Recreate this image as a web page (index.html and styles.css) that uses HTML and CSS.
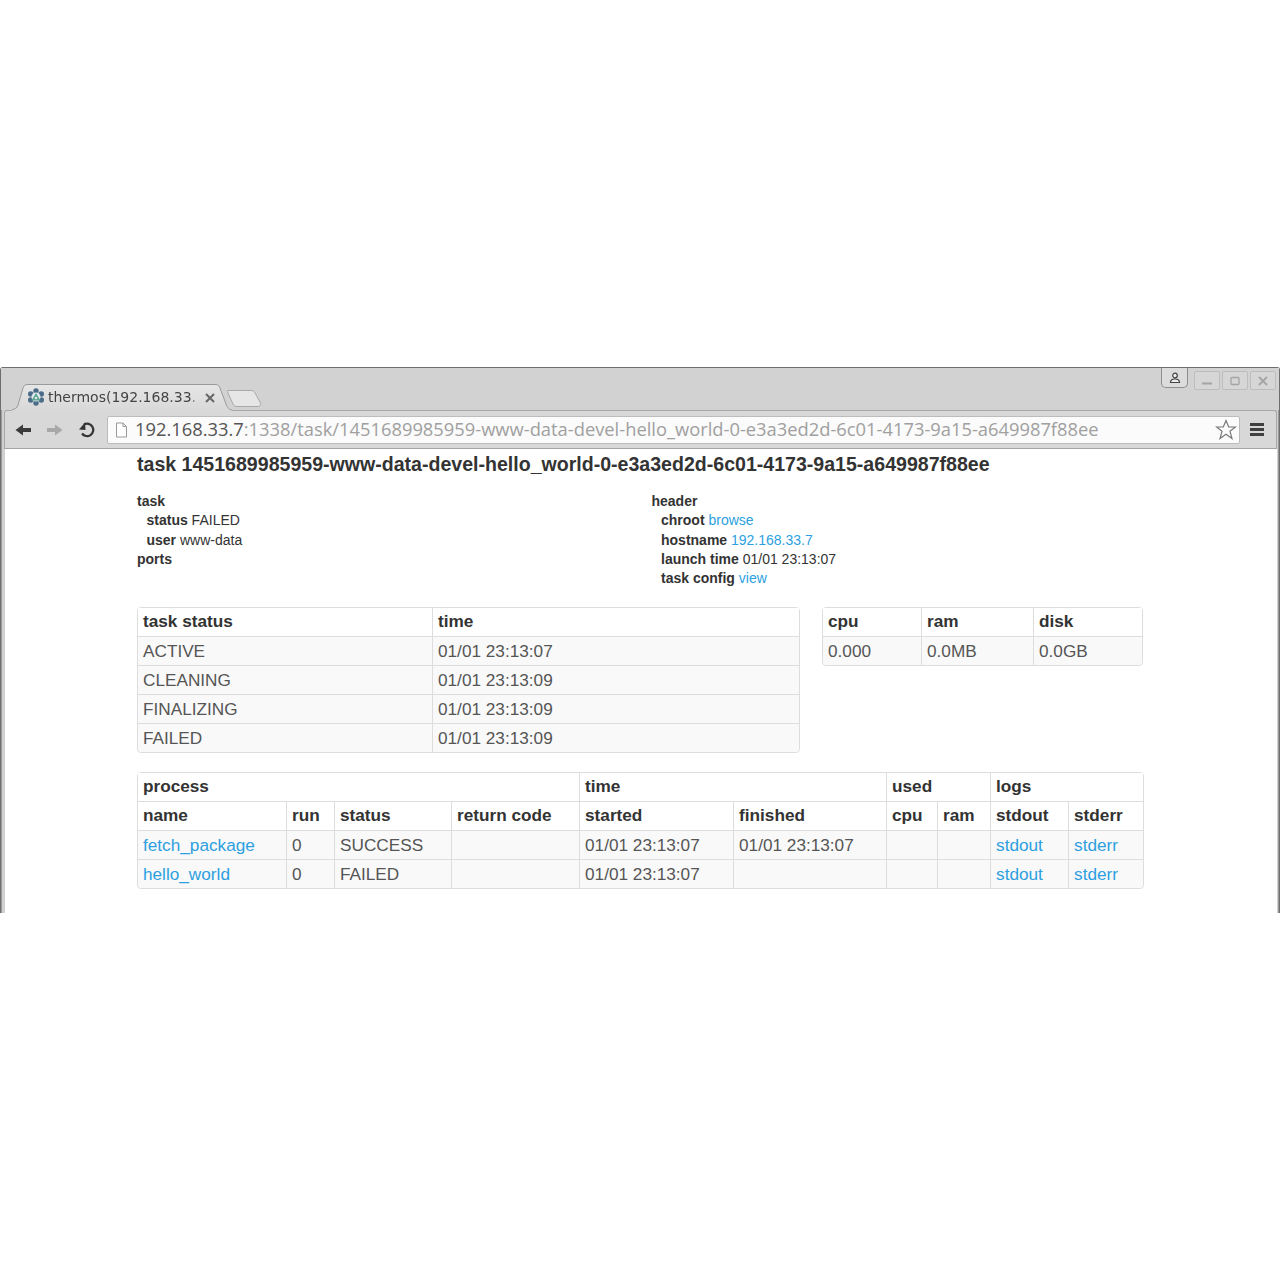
FILE: index.html
```html
<!DOCTYPE html>
<html lang="en">
<head>
<meta charset="utf-8">
<title>thermos</title>
<link rel="stylesheet" href="styles.css">
</head>
<body>
<div class="window">
  <div class="tabstrip">
    <div class="tab">
      <svg class="tab-shape" width="222" height="32" viewBox="0 0 222 32"><defs><linearGradient id="tabfill" x1="0" y1="0" x2="0" y2="1"><stop offset="0" stop-color="#e6e6e6"/><stop offset="1" stop-color="#d8d8d8"/></linearGradient></defs><path d="M0 28.500C3 28.500 5 27 6 24L11 7C12 4.500 13 3.500 16 3.500H203C206 3.500 207 4.500 208 7L214 23C215.500 27 217 28.500 220 29V31H0Z" fill="url(#tabfill)"/><path d="M0 28.500C3 28.500 5 27 6 24L11 7C12 4.500 13 3.500 16 3.500H203C206 3.500 207 4.500 208 7L214 23C215.500 27 217 28.500 220 29" fill="none" stroke="#9a9a9a"/></svg>
      <svg class="favicon" width="18" height="18" viewBox="0 0 18 18"><g fill="#4a6c88"><circle cx="9" cy="3" r="2.700"/><circle cx="14.300" cy="6" r="2.700"/><circle cx="14.300" cy="12" r="2.700"/><circle cx="9" cy="15" r="2.700"/><circle cx="3.700" cy="12" r="2.700"/><circle cx="3.700" cy="6" r="2.700"/></g><circle cx="9" cy="9" r="4.500" fill="#dfe8ec"/><path d="M9 5L13.500 12.500H4.500Z" fill="#5da58f"/><circle cx="9" cy="10" r="1.300" fill="#dfe8ec"/></svg>
      <span class="tab-title">thermos(192.168.33.7</span>
      <svg class="tab-close" width="10" height="10" viewBox="0 0 10 10"><path d="M1 1L9 9M9 1L1 9" stroke="#666" stroke-width="2"/></svg>
    </div>
    <svg class="newtab" width="36" height="19" viewBox="0 0 36 19"><path d="M1 1.500H24C26 1.500 27 2 28 4L33 13C34 15 34 17.500 31 17.500H10C8 17.500 7 17 6 15L1 4C0.500 2.500 0 1.500 1 1.500Z" fill="#e6e6e6" stroke="#a8a8a8"/></svg>
    <div class="spacer"></div>
    <div class="profile"><svg width="12" height="12" viewBox="0 0 12 12"><circle cx="6" cy="3.500" r="2.300" fill="#eee" stroke="#444" stroke-width="1.200"/><path d="M1.500 10.500C1.500 8 3.500 7 6 7S10.500 8 10.500 10.500Z" fill="#eee" stroke="#444" stroke-width="1.200"/></svg></div>
    <div class="winbtn"><svg width="12" height="10" viewBox="0 0 12 10"><path d="M1 7.500H11" stroke="#a4a4a4" stroke-width="2"/></svg></div>
    <div class="winbtn"><svg width="12" height="10" viewBox="0 0 12 10"><rect x="2" y="1.500" width="8" height="7" rx="1" fill="none" stroke="#a4a4a4" stroke-width="1.300"/></svg></div>
    <div class="winbtn"><svg width="12" height="10" viewBox="0 0 12 10"><path d="M2 1L10 9M10 1L2 9" stroke="#a4a4a4" stroke-width="1.800"/></svg></div>
  </div>
  <div class="toolbar">
    <svg class="nav" width="18" height="14" viewBox="0 0 18 14"><path d="M0.500 7L8 1.500V5H16V9H8V12.500Z" fill="#3a3a3a"/></svg>
    <svg class="nav nav-fwd" width="18" height="14" viewBox="0 0 18 14"><path d="M16.500 7L9 1.500V5H1V9H9V12.500Z" fill="#a8a8a8"/></svg>
    <svg class="nav nav-reload" width="18" height="18" viewBox="0 0 18 18"><path d="M6 3.500A6.200 6.200 0 1 1 4 12.500" fill="none" stroke="#333" stroke-width="2.200"/><path d="M1 8.500L7.500 9L7 1.500Z" fill="#333"/></svg>
    <div class="omnibox">
      <svg class="pageicon" width="13" height="16" viewBox="0 0 13 16"><path d="M1.500 1H8L11.500 4.500V15H1.500Z" fill="#fff" stroke="#999"/><path d="M8 1V4.500H11.500" fill="none" stroke="#999"/></svg>
      <span class="url"><span class="host">192.168.33.7</span>:1338/task/1451689985959-www-data-devel-hello_world-0-e3a3ed2d-6c01-4173-9a15-a649987f88ee</span>
      <svg class="star" width="22" height="21" viewBox="0 0 22 21"><path d="M11 1.500L13.700 8H20.500L15 12.300L17 19.500L11 15.300L5 19.500L7 12.300L1.500 8H8.300Z" fill="#fbfbfb" stroke="#777" stroke-width="1.200"/></svg>
    </div>
    <div class="menu"><i></i><i></i><i></i></div>
  </div>
  <main class="page">
    <h1 class="title">task 1451689985959-www-data-devel-hello_world-0-e3a3ed2d-6c01-4173-9a15-a649987f88ee</h1>
    <div class="summary">
      <div class="summary-col">
        <div class="line"><b>task</b></div>
        <div class="line in"><b>status</b> FAILED</div>
        <div class="line in"><b>user</b> www-data</div>
        <div class="line"><b>ports</b></div>
      </div>
      <div class="summary-col">
        <div class="line"><b>header</b></div>
        <div class="line in"><b>chroot</b> <a href="#">browse</a></div>
        <div class="line in"><b>hostname</b> <a href="#">192.168.33.7</a></div>
        <div class="line in"><b>launch time</b> 01/01 23:13:07</div>
        <div class="line in"><b>task config</b> <a href="#">view</a></div>
      </div>
    </div>
    <div class="row-top">
      <table class="grid t-status">
        <colgroup><col class="c294"><col></colgroup>
        <tr><th>task status</th><th>time</th></tr>
        <tr><td>ACTIVE</td><td>01/01 23:13:07</td></tr>
        <tr><td>CLEANING</td><td>01/01 23:13:09</td></tr>
        <tr><td>FINALIZING</td><td>01/01 23:13:09</td></tr>
        <tr><td>FAILED</td><td>01/01 23:13:09</td></tr>
      </table>
      <table class="grid t-res">
        <colgroup><col class="c98"><col class="c112"><col></colgroup>
        <tr><th>cpu</th><th>ram</th><th>disk</th></tr>
        <tr><td>0.000</td><td>0.0MB</td><td>0.0GB</td></tr>
      </table>
    </div>
    <table class="grid t-proc">
      <colgroup><col class="p1"><col class="p2"><col class="p3"><col class="p4"><col class="p5"><col class="p6"><col class="p7"><col class="p8"><col class="p9"><col></colgroup>
      <tr><th colspan="4">process</th><th colspan="2">time</th><th colspan="2">used</th><th colspan="2">logs</th></tr>
      <tr><th>name</th><th>run</th><th>status</th><th>return code</th><th>started</th><th>finished</th><th>cpu</th><th>ram</th><th>stdout</th><th>stderr</th></tr>
      <tr><td><a href="#">fetch_package</a></td><td>0</td><td>SUCCESS</td><td></td><td>01/01 23:13:07</td><td>01/01 23:13:07</td><td></td><td></td><td><a href="#">stdout</a></td><td><a href="#">stderr</a></td></tr>
      <tr><td><a href="#">hello_world</a></td><td>0</td><td>FAILED</td><td></td><td>01/01 23:13:07</td><td></td><td></td><td></td><td><a href="#">stdout</a></td><td><a href="#">stderr</a></td></tr>
    </table>
  </main>
</div>
</body>
</html>
```

FILE: styles.css
```css
* { box-sizing: border-box; }
html, body { margin: 0; background: #fff; }
body { padding-top: 367px; height: 1280px; font-family: "Liberation Sans", Arial, sans-serif; color: #333; }
.window { height: 546px; background: #d0d0d0; border: 1px solid #6e6e6e; border-bottom: 0; border-radius: 3px 3px 0 0; display: flex; flex-direction: column; box-shadow: inset 1px 0 #9a9a9a, inset -1px 0 #9a9a9a; }
.tabstrip { height: 42px; display: flex; align-items: flex-start; padding-left: 11px; padding-right: 1px; background: #d2d2d2; flex: none; }
.tab { position: relative; width: 215px; height: 42px; display: flex; align-items: center; padding: 15px 0 0 15px; flex: none; z-index: 1; margin-bottom: -1px; }
.tab-shape { position: absolute; left: 0; top: 13px; }
.favicon { position: relative; margin-right: 3px; flex: none; }
.tab-title { position: relative; flex: none; white-space: nowrap; font-family: "DejaVu Sans", sans-serif; font-size: 14px; color: #444; margin-right: -10px; -webkit-mask-image: linear-gradient(to right, #000 143px, transparent 150px); mask-image: linear-gradient(to right, #000 143px, transparent 150px); }
.tab-close { position: absolute; left: 193px; top: 25px; }
.newtab { margin: 21px 0 0 0; flex: none; }
.spacer { flex: 1; }
.profile { width: 27px; height: 20px; margin-right: 6px; display: flex; align-items: center; justify-content: center; background: #dcdcdc; border: 1px solid #8e8e8e; border-top: 0; border-radius: 0 0 5px 5px; }
.winbtn { width: 26px; height: 19px; margin: 3px 2px 0 0; display: flex; align-items: center; justify-content: center; background: #d6d6d6; border: 1px solid #bdbdbd; border-radius: 2px; }
.toolbar { height: 39px; flex: none; display: flex; align-items: center; background: #d8d8d8; border-top: 1px solid #a8a8a8; border-bottom: 1px solid #a4a4a4; border-right: 1px solid #a8a8a8; border-left: 1px solid #a8a8a8; padding: 0 0 0 10px; margin: 0 2px 0 3px; border-radius: 3px 3px 0 0; }
.nav { flex: none; }
.nav-fwd { margin-left: 13px; }
.nav-reload { margin-left: 14px; }
.omnibox { flex: none; width: 1133px; height: 28px; margin-left: 11px; display: flex; align-items: center; background: #fbfbfb; border: 1px solid #bcbcbc; border-radius: 2px; padding-left: 7px; }
.pageicon { flex: none; }
.url { margin-left: 7px; padding-bottom: 2px; flex: 1; white-space: nowrap; overflow: hidden; font-family: "Open Sans", sans-serif; font-size: 18.330px; color: #a0a0a0; }
.host { color: #555; }
.star { flex: none; margin-right: 2px; }
.menu { flex: none; width: 14px; margin-left: 10px; display: flex; flex-direction: column; gap: 2px; }
.menu i { display: block; height: 3px; background: #3f3f3f; }
.page { flex: 1; background: #fff; margin-left: 4px; margin-right: 2px; padding: 4px 134px 0 132px; overflow: hidden; }
.title { margin: 0; font-size: 19.570px; line-height: 22px; font-weight: bold; white-space: nowrap; color: #333; }
.summary { display: flex; margin-top: 17px; font-size: 14px; line-height: 19.250px; height: 115px; }
.summary-col { width: 514.500px; flex: none; }
.in { padding-left: 9.500px; }
a { color: #2d9fe0; text-decoration: none; }
.row-top { display: flex; justify-content: space-between; align-items: flex-start; margin-bottom: 19px; width: 1006px; }
.grid { border-collapse: separate; border-spacing: 0; table-layout: fixed; border: 1px solid #ddd; border-radius: 4px; font-size: 17.200px; }
.grid th, .grid td { height: 29px; padding: 0 5px; text-align: left; border-left: 1px solid #ddd; border-top: 1px solid #ddd; white-space: nowrap; line-height: 20px; }
.grid th { padding-bottom: 2px; background: #fff; color: #333; }
.grid th:first-child, .grid td:first-child { border-left: 0; }
.grid tr:first-child th { border-top: 0; height: 28px; }
.grid td { background: #f9f9f9; color: #555; }
.grid tr:last-child td:first-child { border-bottom-left-radius: 4px; }
.grid tr:last-child td:last-child { border-bottom-right-radius: 4px; }
.t-status { width: 663px; }
.t-res { width: 321px; }
.t-proc { width: 1007px; }
.c294 { width: 294px; }
.c98 { width: 98px; }
.c112 { width: 112px; }
.p1 { width: 148px; }
.p2 { width: 48px; }
.p3 { width: 117px; }
.p4 { width: 128px; }
.p5 { width: 154px; }
.p6 { width: 153px; }
.p7 { width: 51px; }
.p8 { width: 53px; }
.p9 { width: 78px; }
```
